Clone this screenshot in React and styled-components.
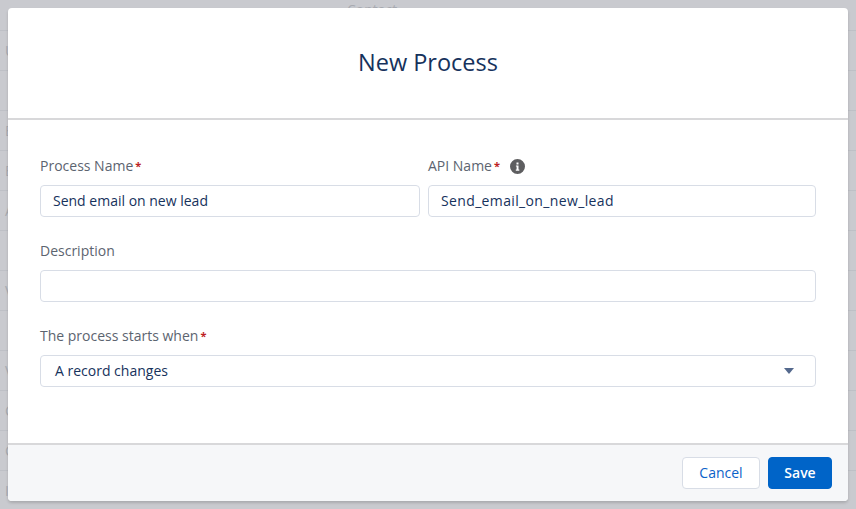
import React from 'react';
import styled, { createGlobalStyle } from 'styled-components';

const GlobalStyle = createGlobalStyle`
    html, body {
        margin: 0;
        padding: 0;
        height: 100%;
        overflow: hidden;
        background: #c9cacf;
        font-family: "Open Sans", "Noto Sans", sans-serif;
    }
`;

const Page = styled.div`
    position: relative;
    width: 856px;
    height: 509px;
    overflow: hidden;
    background: #c9cacf;
`;

const Table = styled.div`
    display: flex;
    flex-direction: column;
    margin-top: -9px;
`;

const TableRow = styled.div`
    box-sizing: border-box;
    display: flex;
    align-items: center;
    height: 40px;
    border-bottom: 1px solid #bec0c6;
    padding: 0 0 ${props => (props.$header ? '2px' : '0')} ${props => (props.$header ? '347px' : '5px')};
    font-size: 14px;
    color: #a8aab1;
`;

const Modal = styled.div`
    position: absolute;
    top: 8px;
    left: 8px;
    width: 840px;
    height: 493px;
    display: flex;
    flex-direction: column;
    background: #fff;
    border-radius: 4px;
    box-shadow: 0 2px 3px rgba(0, 0, 0, 0.16);
    overflow: hidden;
`;

const Header = styled.header`
    height: 108px;
    padding-bottom: 2px;
    flex: none;
    display: flex;
    align-items: center;
    justify-content: center;
    border-bottom: 2px solid #d8d8da;
`;

const Title = styled.h2`
    margin: 0;
    font-size: 23.5px;
    font-weight: 400;
    color: #16325c;
`;

const Body = styled.div`
    flex: 1;
    display: flex;
    flex-direction: column;
    gap: 24px;
    padding: 36px 32px 0;
`;

const Row = styled.div`
    display: grid;
    grid-template-columns: 380px 388px;
    column-gap: 8px;
`;

const Field = styled.div`
    display: flex;
    flex-direction: column;
    grid-column: ${props => (props.$wide ? '1 / -1' : 'auto')};
`;

const Label = styled.label`
    display: flex;
    align-items: center;
    height: 19px;
    margin-bottom: 10px;
    font-size: 14px;
    color: #5c6470;
`;

const Required = styled.span`
    margin-left: 2px;
    align-self: flex-start;
    line-height: 19px;
    font-size: 11px;
    color: #bd1f24;
    font-weight: 700;
`;

const InfoIcon = styled.svg`
    width: 15px;
    height: 15px;
    margin: 2px 0 0 10px;
    fill: #5e5e60;
`;

const Input = styled.input`
    box-sizing: border-box;
    width: 100%;
    height: 32px;
    padding: 0 12px 1px;
    background: #fff;
    border: 1px solid #d8dde6;
    border-radius: 4px;
    font-family: inherit;
    font-size: 14px;
    letter-spacing: ${props => props.$spacing || 'normal'};
    color: #16325c;
    outline: none;
`;

const Select = styled.div`
    box-sizing: border-box;
    height: 32px;
    display: flex;
    align-items: center;
    justify-content: space-between;
    padding: 0 21px 2px 14px;
    border: 1px solid #d8dde6;
    border-radius: 4px;
    font-size: 14px;
    color: #16325c;
`;

const Caret = styled.svg`
    width: 10px;
    height: 6px;
    margin-top: 1px;
    fill: #54698d;
`;

const Footer = styled.footer`
    height: 56px;
    flex: none;
    display: flex;
    align-items: center;
    justify-content: flex-end;
    gap: 8px;
    padding-right: 16px;
    background: #f6f7f9;
    border-top: 2px solid #d8d8da;
`;

const Button = styled.button`
    box-sizing: border-box;
    width: ${props => (props.$primary ? '64px' : '78px')};
    height: 32px;
    padding: 0 0 2px;
    border: 1px solid ${props => (props.$primary ? '#0064c8' : '#d8dde6')};
    border-radius: 4px;
    background: ${props => (props.$primary ? '#0064c8' : '#fff')};
    color: ${props => (props.$primary ? '#fff' : '#0b62c9')};
    font-family: inherit;
    font-size: 14px;
    font-weight: ${props => (props.$primary ? 600 : 400)};
`;

const rows = ['Contact', 'U', '', 'E', 'E', 'A', '', 'V', '', 'V', 'C', 'C', 'I'];

function App() {
    return (
        <Page>
            <GlobalStyle />
            <Table>
                {rows.map((text, i) => (
                    <TableRow key={i} $header={i === 0}>
                        {text}
                    </TableRow>
                ))}
            </Table>
            <Modal>
                <Header>
                    <Title>New Process</Title>
                </Header>
                <Body>
                    <Row>
                        <Field>
                            <Label>
                                Process Name<Required>*</Required>
                            </Label>
                            <Input readOnly value="Send email on new lead" />
                        </Field>
                        <Field>
                            <Label>
                                API Name<Required>*</Required>
                                <InfoIcon viewBox="0 0 15 15">
                                    <path
                                        fillRule="evenodd"
                                        d="M7.5 0a7.5 7.5 0 1 0 0 15 7.5 7.5 0 0 0 0-15zM6.5 3.4h2v2h-2zM5.9 6.4h2.6v4.2h.8v1.1H5.8v-1.1h.8V7.5h-.7z"
                                    />
                                </InfoIcon>
                            </Label>
                            <Input readOnly $spacing="0.36px" value="Send_email_on_new_lead" />
                        </Field>
                    </Row>
                    <Row>
                        <Field $wide>
                            <Label>Description</Label>
                            <Input readOnly value="" />
                        </Field>
                    </Row>
                    <Row>
                        <Field $wide>
                            <Label>
                                The process starts when<Required>*</Required>
                            </Label>
                            <Select>
                                A record changes
                                <Caret viewBox="0 0 10 6">
                                    <path d="M0 0h10L5 6z" />
                                </Caret>
                            </Select>
                        </Field>
                    </Row>
                </Body>
                <Footer>
                    <Button>Cancel</Button>
                    <Button $primary>Save</Button>
                </Footer>
            </Modal>
        </Page>
    );
}

export default App;
